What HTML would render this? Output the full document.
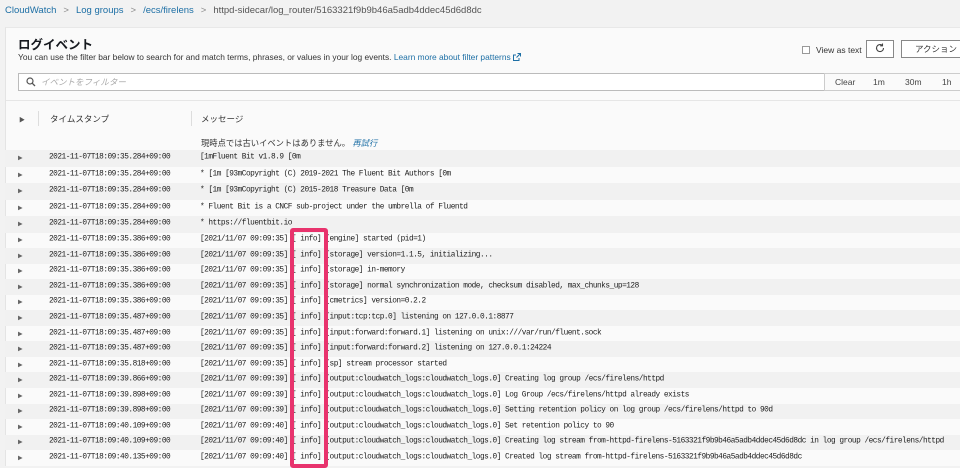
<!DOCTYPE html>
<html><head><meta charset="utf-8">
<style>
*{margin:0;padding:0;box-sizing:border-box}
body{width:960px;height:466px;overflow:hidden;background:#f2f2f2;font-family:"Liberation Sans","Noto Sans CJK JP",sans-serif;color:#16191f;position:relative}
.bc{position:absolute;top:5px;left:5px;font-size:9.5px;color:#555;white-space:nowrap}
.bc a{color:#1d6fa5;text-decoration:none}
.bc .s{color:#888;margin:0 7px}
.panel{position:absolute;left:5px;top:27px;right:0;bottom:0;background:#fafafa;border-left:1px solid #e4e4e4;border-top:1px solid #e8e8e8}
.t{position:absolute;left:12px;top:6px;font-size:12.5px;font-weight:bold}
.d{position:absolute;left:12px;top:24px;font-size:8.4px;color:#333;white-space:nowrap}
.d a{color:#1d6fa5}
.vt{position:absolute;left:796px;top:17px;font-size:8.5px;color:#333;white-space:nowrap}
.vt i{display:inline-block;width:8px;height:8px;border:1px solid #999;background:#fff;vertical-align:-1px;margin-right:6px}
.btn{position:absolute;top:12px;height:18px;border:1px solid #888;background:#fff;font-size:8.5px;color:#333;text-align:center;line-height:16px}
.search{position:absolute;left:12px;top:45px;width:808px;height:18px;border:1px solid #bbb;background:#fff;font-size:8.5px;color:#aaa;line-height:16px;padding-left:22px}
.tb{position:absolute;left:818px;top:45px;width:150px;height:18px;border:1px solid #ccc;background:#fafafa;font-size:8.5px;color:#444;line-height:16px}
.tb span{position:absolute}
.hr{position:absolute;left:0;right:0;top:72px;border-top:1px solid #e6e6e6}
.hdr{position:absolute;left:0;right:0;top:76px;height:29px;font-size:8.5px;color:#333}
.hdr span{position:absolute;top:9px}
.sep{position:absolute;top:7px;width:1px;height:15px;background:#ddd}
.tri{font-size:6px;color:#555}
.none{position:absolute;left:0;right:0;top:105px;height:17px;font-size:8.3px;color:#333}
.none span{position:absolute;left:195px;top:4px}
.none a{color:#1d6fa5;font-style:italic}
.r{height:15.55px;position:relative;font-family:"Liberation Mono",monospace;font-size:7.8px;letter-spacing:-0.5px;color:#222;white-space:nowrap;overflow:hidden}
.r.a{height:16.5px}
.r:nth-child(odd){background:#f1f1f1}
.r span{position:absolute;top:50%;transform:translateY(-50%);line-height:9px}
.r .tr{left:13px;font-size:6px;color:#666;font-family:"DejaVu Sans",sans-serif;letter-spacing:0}
.r .ts{left:44px}
.r .m{left:195px}
.box{position:absolute;left:290px;top:228px;width:38px;height:240px;border:4px solid #e8336d;border-radius:3px}
</style></head><body>
<div class="bc"><a>CloudWatch</a><span class="s">&gt;</span><a>Log groups</a><span class="s">&gt;</span><a>/ecs/firelens</a><span class="s">&gt;</span>httpd-sidecar/log_router/5163321f9b9b46a5adb4ddec45d6d8dc</div>
<div class="panel">
<div class="t">ログイベント</div>
<div class="d">You can use the filter bar below to search for and match terms, phrases, or values in your log events. <a>Learn more about filter patterns</a> <svg width="8" height="8" viewBox="0 0 8 8" style="vertical-align:-1px"><path d="M4.5 .5h3v3M7.5 .5L3.5 4.5M6 5v2.5H.5V2H3" fill="none" stroke="#1d6fa5" stroke-width="1"/></svg></div>
<div class="vt"><i></i>View as text</div>
<div class="btn" style="left:860px;width:28px"><svg width="10" height="10" viewBox="0 0 10 10" style="vertical-align:-1px"><path d="M8.5 5A3.5 3.5 0 1 1 7 2.2M7.5 .5v2.3H5.2" fill="none" stroke="#444" stroke-width="1.1"/></svg></div>
<div class="btn" style="left:895px;width:70px">アクション</div>
<div class="search"><svg width="10" height="10" viewBox="0 0 10 10" style="position:absolute;left:7px;top:3px"><circle cx="4" cy="4" r="3" fill="none" stroke="#555" stroke-width="1.2"/><path d="M6.2 6.2L9 9" stroke="#555" stroke-width="1.3"/></svg><i>イベントをフィルター</i></div>
<div class="tb"><span style="left:10px">Clear</span><span style="left:48px">1m</span><span style="left:80px">30m</span><span style="left:117px">1h</span></div>
<div class="hr"></div>
<div class="hdr"><span class="tri" style="left:13px;top:11px">▶</span><div class="sep" style="left:32px"></div><span style="left:44px">タイムスタンプ</span><div class="sep" style="left:185px"></div><span style="left:195px">メッセージ</span></div>
<div class="none"><span>現時点では古いイベントはありません。 <a>再試行</a></span></div>
</div>
<div style="position:absolute;left:5px;top:150px;right:0">
<div class="r a"><span class="tr">▶</span><span class="ts">2021-11-07T18:09:35.284+09:00</span><span class="m">[1mFluent Bit v1.8.9 [0m</span></div>
<div class="r a"><span class="tr">▶</span><span class="ts">2021-11-07T18:09:35.284+09:00</span><span class="m">* [1m [93mCopyright (C) 2019-2021 The Fluent Bit Authors [0m</span></div>
<div class="r a"><span class="tr">▶</span><span class="ts">2021-11-07T18:09:35.284+09:00</span><span class="m">* [1m [93mCopyright (C) 2015-2018 Treasure Data [0m</span></div>
<div class="r a"><span class="tr">▶</span><span class="ts">2021-11-07T18:09:35.284+09:00</span><span class="m">* Fluent Bit is a CNCF sub-project under the umbrella of Fluentd</span></div>
<div class="r a"><span class="tr">▶</span><span class="ts">2021-11-07T18:09:35.284+09:00</span><span class="m">* https://fluentbit.io</span></div>
<div class="r"><span class="tr">▶</span><span class="ts">2021-11-07T18:09:35.386+09:00</span><span class="m">[2021/11/07 09:09:35] [ info] [engine] started (pid=1)</span></div>
<div class="r"><span class="tr">▶</span><span class="ts">2021-11-07T18:09:35.386+09:00</span><span class="m">[2021/11/07 09:09:35] [ info] [storage] version=1.1.5, initializing...</span></div>
<div class="r"><span class="tr">▶</span><span class="ts">2021-11-07T18:09:35.386+09:00</span><span class="m">[2021/11/07 09:09:35] [ info] [storage] in-memory</span></div>
<div class="r"><span class="tr">▶</span><span class="ts">2021-11-07T18:09:35.386+09:00</span><span class="m">[2021/11/07 09:09:35] [ info] [storage] normal synchronization mode, checksum disabled, max_chunks_up=128</span></div>
<div class="r"><span class="tr">▶</span><span class="ts">2021-11-07T18:09:35.386+09:00</span><span class="m">[2021/11/07 09:09:35] [ info] [cmetrics] version=0.2.2</span></div>
<div class="r"><span class="tr">▶</span><span class="ts">2021-11-07T18:09:35.487+09:00</span><span class="m">[2021/11/07 09:09:35] [ info] [input:tcp:tcp.0] listening on 127.0.0.1:8877</span></div>
<div class="r"><span class="tr">▶</span><span class="ts">2021-11-07T18:09:35.487+09:00</span><span class="m">[2021/11/07 09:09:35] [ info] [input:forward:forward.1] listening on unix:///var/run/fluent.sock</span></div>
<div class="r"><span class="tr">▶</span><span class="ts">2021-11-07T18:09:35.487+09:00</span><span class="m">[2021/11/07 09:09:35] [ info] [input:forward:forward.2] listening on 127.0.0.1:24224</span></div>
<div class="r"><span class="tr">▶</span><span class="ts">2021-11-07T18:09:35.818+09:00</span><span class="m">[2021/11/07 09:09:35] [ info] [sp] stream processor started</span></div>
<div class="r"><span class="tr">▶</span><span class="ts">2021-11-07T18:09:39.866+09:00</span><span class="m">[2021/11/07 09:09:39] [ info] [output:cloudwatch_logs:cloudwatch_logs.0] Creating log group /ecs/firelens/httpd</span></div>
<div class="r"><span class="tr">▶</span><span class="ts">2021-11-07T18:09:39.898+09:00</span><span class="m">[2021/11/07 09:09:39] [ info] [output:cloudwatch_logs:cloudwatch_logs.0] Log Group /ecs/firelens/httpd already exists</span></div>
<div class="r"><span class="tr">▶</span><span class="ts">2021-11-07T18:09:39.898+09:00</span><span class="m">[2021/11/07 09:09:39] [ info] [output:cloudwatch_logs:cloudwatch_logs.0] Setting retention policy on log group /ecs/firelens/httpd to 90d</span></div>
<div class="r"><span class="tr">▶</span><span class="ts">2021-11-07T18:09:40.109+09:00</span><span class="m">[2021/11/07 09:09:40] [ info] [output:cloudwatch_logs:cloudwatch_logs.0] Set retention policy to 90</span></div>
<div class="r"><span class="tr">▶</span><span class="ts">2021-11-07T18:09:40.109+09:00</span><span class="m">[2021/11/07 09:09:40] [ info] [output:cloudwatch_logs:cloudwatch_logs.0] Creating log stream from-httpd-firelens-5163321f9b9b46a5adb4ddec45d6d8dc in log group /ecs/firelens/httpd</span></div>
<div class="r"><span class="tr">▶</span><span class="ts">2021-11-07T18:09:40.135+09:00</span><span class="m">[2021/11/07 09:09:40] [ info] [output:cloudwatch_logs:cloudwatch_logs.0] Created log stream from-httpd-firelens-5163321f9b9b46a5adb4ddec45d6d8dc</span></div>
</div>
<div class="box"></div>
</body></html>
